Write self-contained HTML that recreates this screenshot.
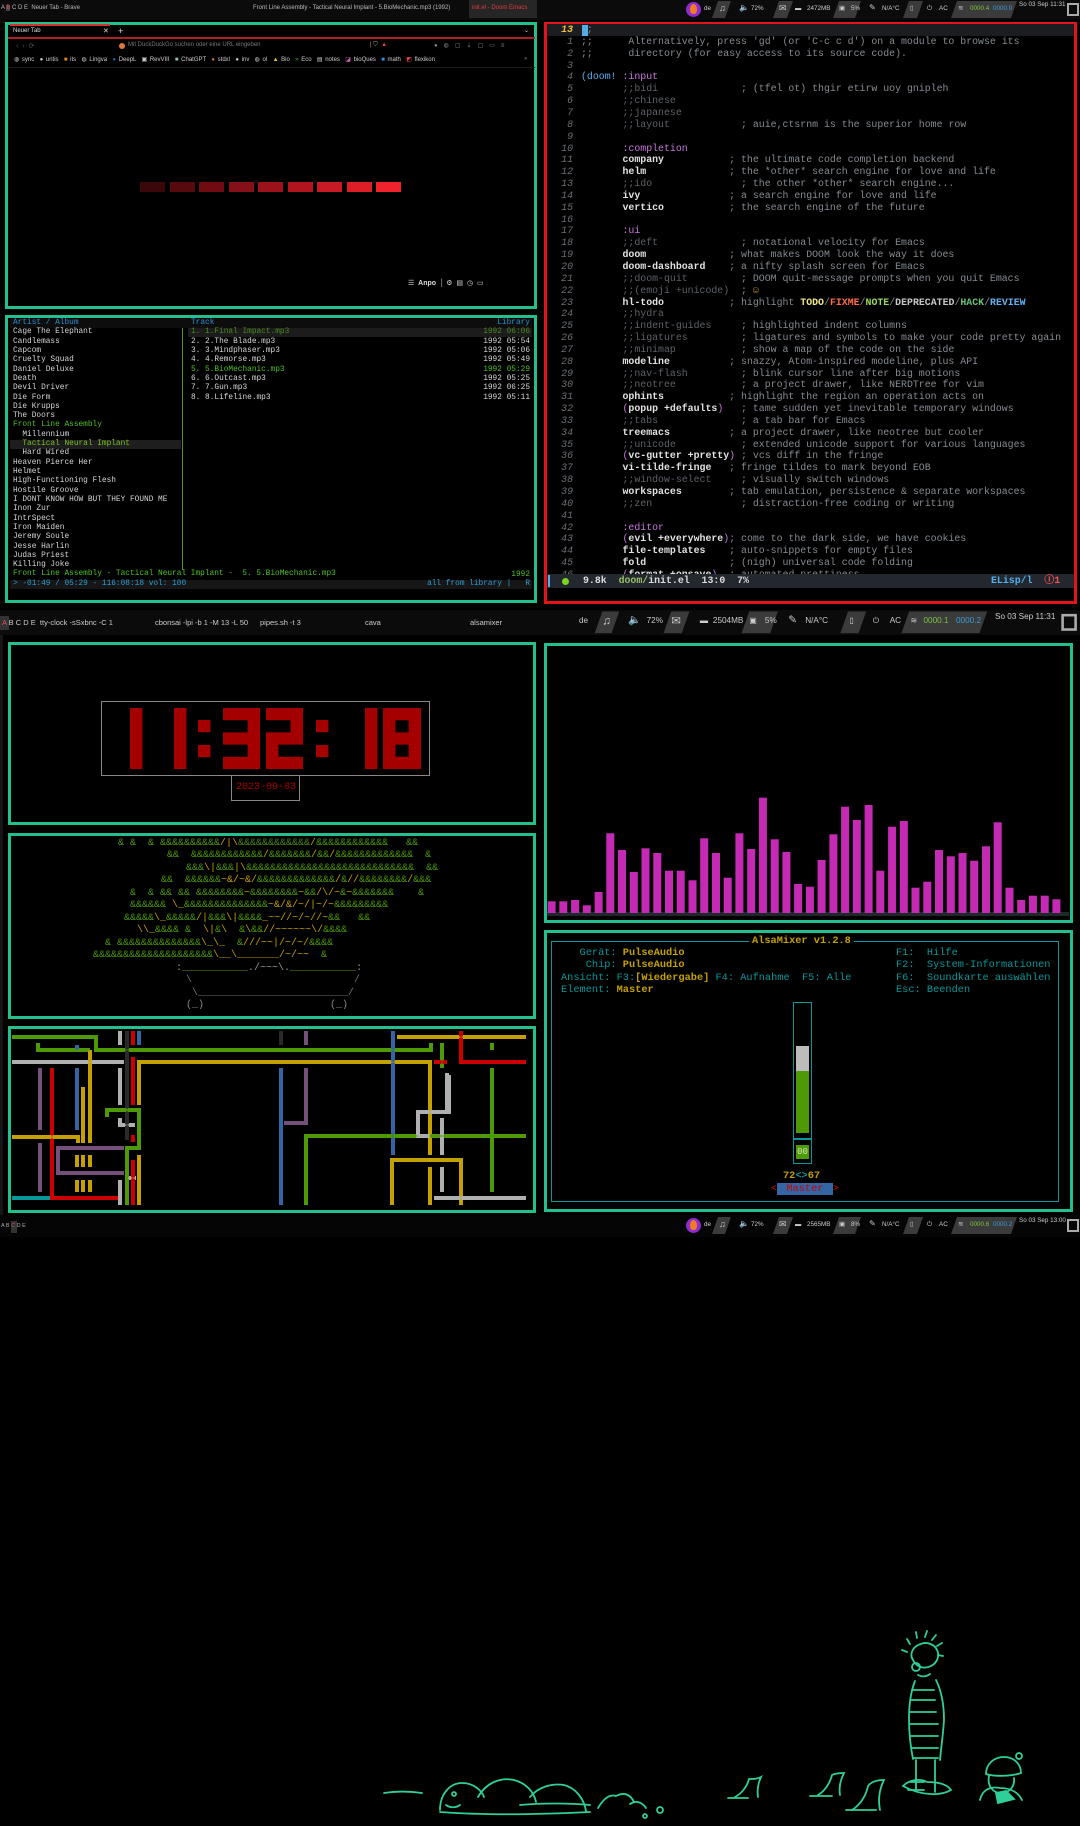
<!DOCTYPE html>
<html><head><meta charset="utf-8">
<style>
*{margin:0;padding:0;box-sizing:border-box}
body{width:1080px;height:1826px;background:#000;position:relative;overflow:hidden;font-family:"Liberation Sans",sans-serif;color:#ccc}
.a{position:absolute}
.gb{position:absolute;border:3px solid #22c08e}
.mono{font-family:"Liberation Mono","DejaVu Sans Mono",monospace;white-space:pre}
.t6{font-size:6px;white-space:nowrap}
.seg{position:absolute;top:1px;height:17px;background:#3b3b3b;clip-path:polygon(6px 0,100% 0,calc(100% - 6px) 100%,0 100%)}
.st{position:absolute;font-size:6.3px;color:#ccc;white-space:nowrap;top:5px}
.c{color:#858b92}.d{color:#5d6269}.k{color:#e2e2e2;font-weight:bold}.m{color:#c678dd}.b{color:#51afef}
</style></head><body>

<!-- TOP BAR -->
<div class="a" style="left:0;top:0;width:1080px;height:20px;background:#0b0b0b"></div>
<div class="a t6" style="left:1px;top:5px;color:#bbb">A <span style="background:#444;color:#e05050">B</span> C D E &nbsp;Neuer Tab - Brave</div>
<div class="a t6" style="left:253px;top:5px;color:#bbb">Front Line Assembly - Tactical Neural Implant - 5.BioMechanic.mp3 (1992)</div>
<div class="a t6" style="left:469px;top:0;width:68px;height:18px;background:#262626;color:#e03a3a;padding:5px 0 0 3px">init.el - Doom Emacs</div>

<div class="a" style="left:685px;top:0;width:395px;height:20px">
 <div class="a" style="left:1px;top:2px;width:15px;height:15px;border-radius:50%;background:#8d2bd0"></div>
 <div class="a" style="left:5px;top:4px;width:7px;height:10px;background:#f07b20;border-radius:50% 50% 40% 40%"></div>
 <div class="st" style="left:19px">de</div>
 <div class="seg" style="left:27px;width:19px"></div><div class="st" style="left:34px;top:3px;font-size:9px">♫</div>
 <div class="st" style="left:54px;top:3px;font-size:8px">🔈</div><div class="st" style="left:66px">72%</div>
 <div class="seg" style="left:88px;width:20px"></div><div class="st" style="left:94px;top:3px;font-size:9px">✉</div>
 <div class="st" style="left:110px">▬</div><div class="st" style="left:122px">2472MB</div>
 <div class="seg" style="left:148px;width:28px"></div><div class="st" style="left:154px">▣</div><div class="st" style="left:166px">5%</div>
 <div class="st" style="left:184px;top:3px;font-size:8px">✎</div><div class="st" style="left:197px">N/A°C</div>
 <div class="seg" style="left:218px;width:20px"></div><div class="st" style="left:225px">▯</div>
 <div class="st" style="left:242px">⏻</div><div class="st" style="left:254px">AC</div>
 <div class="seg" style="left:266px;width:66px"></div><div class="st" style="left:273px">≋</div>
 <div class="st" style="left:285px;color:#7bc043">0000.4</div><div class="st" style="left:308px;color:#3a9bd5">0000.0</div>
 <div class="st" style="left:334px;top:1px">So 03 Sep 11:31</div>
 <div class="a" style="left:382px;top:3px;width:12px;height:13px;border:2px solid #aaa"></div>
</div>

<!-- BROWSER -->
<div class="gb" style="left:5px;top:22px;width:532px;height:287px"></div>
<div class="a" style="left:10px;top:24px;width:100px;height:2px;background:#d0342c"></div>
<div class="a t6" style="left:13px;top:28px;color:#ddd">Neuer Tab</div>
<div class="a t6" style="left:103px;top:27px;color:#ddd;font-size:7px">✕</div>
<div class="a t6" style="left:118px;top:26px;color:#ddd;font-size:9px">+</div>
<div class="a t6" style="left:524px;top:27px;color:#ddd">⌄</div>
<div class="a" style="left:8px;top:37px;width:527px;height:2px;background:#b02020"></div>
<div class="a t6" style="left:16px;top:42px;color:#555;font-size:7px">‹ &nbsp;› &nbsp;⟳</div>
<div class="a" style="left:119px;top:43px;width:6px;height:6px;border-radius:50%;background:#e07840"></div>
<div class="a t6" style="left:128px;top:42px;color:#777">Mit DuckDuckGo suchen oder eine URL eingeben</div>
<div class="a t6" style="left:370px;top:42px;color:#aaa">| ⛉ &nbsp;<span style="color:#e04040">▲</span></div>
<div class="a t6" style="left:434px;top:42px;color:#888;letter-spacing:6px">●◍▢⇣▢▭≡</div>
<div class="a t6" style="left:14px;top:56px;color:#ccc;word-spacing:1px">◍ sync &nbsp;● untis &nbsp;<span style="color:#e08020">■</span> its &nbsp;◍ Lingva &nbsp;<span style="color:#2060a0">●</span> DeepL &nbsp;▣ RevVIII &nbsp;<span style="color:#8bc4a8">■</span> ChatGPT &nbsp;<span style="color:#c07040">●</span> stdxl &nbsp;● inv &nbsp;◍ ol &nbsp;<span style="color:#e0c040">▲</span> Bio &nbsp;<span style="color:#4a4">»</span> Eco &nbsp;▤ notes &nbsp;<span style="color:#c6a">◪</span> bioQues &nbsp;<span style="color:#3a8ee0">■</span> math &nbsp;<span style="color:#e04040">◩</span> flexikon</div>
<div class="a t6" style="left:524px;top:56px;color:#777">»</div>
<div class="a" style="left:8px;top:67px;width:527px;height:1px;background:#1a1a1a"></div>
<div class="a" style="left:140px;top:182px;height:10px;width:265px">
<div class="a" style="left:0;width:25px;height:10px;background:#3b070a"></div>
<div class="a" style="left:29.5px;width:25px;height:10px;background:#560a0e"></div>
<div class="a" style="left:59px;width:25px;height:10px;background:#6e0c12"></div>
<div class="a" style="left:88.5px;width:25px;height:10px;background:#861017"></div>
<div class="a" style="left:118px;width:25px;height:10px;background:#9b121a"></div>
<div class="a" style="left:147.5px;width:25px;height:10px;background:#b0151e"></div>
<div class="a" style="left:177px;width:25px;height:10px;background:#c71a22"></div>
<div class="a" style="left:206.5px;width:25px;height:10px;background:#dc1e27"></div>
<div class="a" style="left:236px;width:25px;height:10px;background:#f0232d"></div>
</div>
<div class="a t6" style="left:408px;top:279px;color:#ddd;font-size:7px">☰ &nbsp;<b>Anpo</b> &nbsp;│ ⚙ &nbsp;▤ &nbsp;◷ &nbsp;▭</div>

<!-- MUSIC (cmus) -->
<div class="gb" style="left:5px;top:315px;width:532px;height:288px"></div>
<div class="a" style="left:10px;top:319px;width:522px;height:9.3px;background:#0d0d0d"></div>
<div class="a" style="left:188px;top:328px;height:9.3px;width:344px;background:#1c1c1c"></div>
<div class="a" style="left:10px;top:440px;width:171px;height:9.3px;background:#1e1e1e"></div>
<div class="a" style="left:182px;top:328px;width:1px;height:242px;background:#4e9a06"></div>
<div class="a" style="left:10px;top:580px;width:522px;height:9.3px;background:#161616"></div>
<div class="a mono" style="left:13px;top:319px;font-size:7.8px;line-height:9.31px;color:#d6d6d6"><span style="color:#2a8fd0">Artist / Album</span>
Cage The Elephant
Candlemass
Capcom
Cruelty Squad
Daniel Deluxe
Death
Devil Driver
Die Form
Die Krupps
The Doors
<span style="color:#4ec020">Front Line Assembly</span>
  Millennium
  <span style="color:#7ac020">Tactical Neural Implant</span>
  Hard Wired
Heaven Pierce Her
Helmet
High-Functioning Flesh
Hostile Groove
I DONT KNOW HOW BUT THEY FOUND ME
Inon Zur
IntrSpect
Iron Maiden
Jeremy Soule
Jesse Harlin
Judas Priest
Killing Joke
<span style="color:#4ec020">Front Line Assembly - Tactical Neural Implant -  5. 5.BioMechanic.mp3</span>
<span style="color:#2a9fd6">&gt; -01:49 / 05:29 - 116:08:18 vol: 100</span></div>
<div class="a mono" style="left:191px;top:319px;font-size:7.8px;line-height:9.31px;color:#d6d6d6"><span style="color:#2a8fd0">Track</span>
<span style="color:#4a8a20">1. 1.Final Impact.mp3</span>
2. 2.The Blade.mp3
3. 3.Mindphaser.mp3
4. 4.Remorse.mp3
<span style="color:#4ec020">5. 5.BioMechanic.mp3</span>
6. 6.Outcast.mp3
7. 7.Gun.mp3
8. 8.Lifeline.mp3</div>
<div class="a mono" style="left:450px;top:319px;width:80px;text-align:right;font-size:7.8px;line-height:9.31px;color:#d6d6d6"><span style="color:#2a8fd0">Library</span>
<span style="color:#4a8a20">1992 06:06</span>
1992 05:54
1992 05:06
1992 05:49
<span style="color:#4ec020">1992 05:29</span>
1992 05:25
1992 06:25
1992 05:11</div>
<div class="a mono" style="left:420px;top:571px;width:110px;text-align:right;font-size:7.8px;line-height:9.31px"><span style="color:#4ec020">1992</span>
<span style="color:#2a9fd6">all from library |   R</span></div>

<!-- EMACS -->
<div class="a" style="left:544px;top:22px;width:533px;height:582px;border:3px solid #e3131c"></div>
<div class="a" style="left:547px;top:24px;width:527px;height:12px;background:#1b1d21"></div>
<div class="a" style="left:582px;top:25px;width:6px;height:11px;background:#51afef"></div>
<div class="a mono" style="left:548px;top:24.1px;width:25px;text-align:right;font-size:9.9px;line-height:11.84px;color:#6a6f76;font-style:italic;height:550px;overflow:hidden"><b style="color:#ecbe3b">13</b>
1
2
3
4
5
6
7
8
9
10
11
12
13
14
15
16
17
18
19
20
21
22
23
24
25
26
27
28
29
30
31
32
33
34
35
36
37
38
39
40
41
42
43
44
45
46</div>
<div class="a mono" style="left:581px;top:24.1px;font-size:9.9px;line-height:11.84px;color:#bbc2cf;height:550px;overflow:hidden"><span class="c">;;</span>
<span class="c">;;      Alternatively, press 'gd' (or 'C-c c d') on a module to browse its</span>
<span class="c">;;      directory (for easy access to its source code).</span>

<span class="b">(doom!</span> <span class="m">:input</span>
       <span class="d">;;bidi</span>              <span class="c">; (tfel ot) thgir etirw uoy gnipleh</span>
       <span class="d">;;chinese</span>
       <span class="d">;;japanese</span>
       <span class="d">;;layout</span>            <span class="c">; auie,ctsrnm is the superior home row</span>

       <span class="m">:completion</span>
       <span class="k">company</span>           <span class="c">; the ultimate code completion backend</span>
       <span class="k">helm</span>              <span class="c">; the *other* search engine for love and life</span>
       <span class="d">;;ido</span>               <span class="c">; the other *other* search engine...</span>
       <span class="k">ivy</span>               <span class="c">; a search engine for love and life</span>
       <span class="k">vertico</span>           <span class="c">; the search engine of the future</span>

       <span class="m">:ui</span>
       <span class="d">;;deft</span>              <span class="c">; notational velocity for Emacs</span>
       <span class="k">doom</span>              <span class="c">; what makes DOOM look the way it does</span>
       <span class="k">doom-dashboard</span>    <span class="c">; a nifty splash screen for Emacs</span>
       <span class="d">;;doom-quit</span>         <span class="c">; DOOM quit-message prompts when you quit Emacs</span>
       <span class="d">;;(emoji +unicode)</span>  <span class="c">; <span style="color:#f5c518">☺</span></span>
       <span class="k">hl-todo</span>           <span class="c">; highlight </span><b style="color:#f0e68c">TODO</b><span class="c">/</span><b style="color:#ff6c4b">FIXME</b><span class="c">/</span><b style="color:#98d85a">NOTE</b><span class="c">/</span><b style="color:#c8c8c8">DEPRECATED</b><span class="c">/</span><b style="color:#6ac07a">HACK</b><span class="c">/</span><b style="color:#61afef">REVIEW</b>
       <span class="d">;;hydra</span>
       <span class="d">;;indent-guides</span>     <span class="c">; highlighted indent columns</span>
       <span class="d">;;ligatures</span>         <span class="c">; ligatures and symbols to make your code pretty again</span>
       <span class="d">;;minimap</span>           <span class="c">; show a map of the code on the side</span>
       <span class="k">modeline</span>          <span class="c">; snazzy, Atom-inspired modeline, plus API</span>
       <span class="d">;;nav-flash</span>         <span class="c">; blink cursor line after big motions</span>
       <span class="d">;;neotree</span>           <span class="c">; a project drawer, like NERDTree for vim</span>
       <span class="k">ophints</span>           <span class="c">; highlight the region an operation acts on</span>
       <span class="m">(</span><span class="k">popup +defaults</span><span class="m">)</span>   <span class="c">; tame sudden yet inevitable temporary windows</span>
       <span class="d">;;tabs</span>              <span class="c">; a tab bar for Emacs</span>
       <span class="k">treemacs</span>          <span class="c">; a project drawer, like neotree but cooler</span>
       <span class="d">;;unicode</span>           <span class="c">; extended unicode support for various languages</span>
       <span class="m">(</span><span class="k">vc-gutter +pretty</span><span class="m">)</span> <span class="c">; vcs diff in the fringe</span>
       <span class="k">vi-tilde-fringe</span>   <span class="c">; fringe tildes to mark beyond EOB</span>
       <span class="d">;;window-select</span>     <span class="c">; visually switch windows</span>
       <span class="k">workspaces</span>        <span class="c">; tab emulation, persistence &amp; separate workspaces</span>
       <span class="d">;;zen</span>               <span class="c">; distraction-free coding or writing</span>

       <span class="m">:editor</span>
       <span class="m">(</span><span class="k">evil +everywhere</span><span class="m">)</span><span class="c">; come to the dark side, we have cookies</span>
       <span class="k">file-templates</span>    <span class="c">; auto-snippets for empty files</span>
       <span class="k">fold</span>              <span class="c">; (nigh) universal code folding</span>
       <span class="m">(</span><span class="k">format +onsave</span><span class="m">)</span>  <span class="c">; automated prettiness</span></div>
<div class="a" style="left:547px;top:574px;width:527px;height:14px;background:#23272e"></div>
<div class="a" style="left:548px;top:575px;width:2px;height:12px;background:#51afef"></div>
<div class="a" style="left:562px;top:578px;width:7px;height:7px;border-radius:50%;background:#7ed321"></div>
<div class="a mono" style="left:583px;top:575px;font-size:9.9px;line-height:12px;color:#ddd;font-weight:bold">9.8k  <span style="color:#98be65">doom/</span>init.el  13:0  7%</div>
<div class="a mono" style="left:991px;top:575px;font-size:9.9px;line-height:12px;color:#51afef;font-weight:bold">ELisp/l  <span style="color:#ff5050">ⓘ1</span></div>

<!-- SECOND BAR -->
<div class="a" style="left:0;top:610px;width:1080px;height:25px;background:#0b0b0b"></div>
<div class="a" style="left:0;top:616px;width:9px;height:14px;background:#333"></div>
<div class="a" style="left:2px;top:618px;font-size:7.5px;color:#ccc;white-space:nowrap"><span style="color:#e05050">A</span> B C D E &nbsp;tty-clock -sSxbnc -C 1</div>
<div class="a" style="left:155px;top:618px;font-size:7.5px;color:#ccc;white-space:nowrap">cbonsai -lpi -b 1 -M 13 -L 50</div>
<div class="a" style="left:260px;top:618px;font-size:7.5px;color:#ccc;white-space:nowrap">pipes.sh -t 3</div>
<div class="a" style="left:365px;top:618px;font-size:7.5px;color:#ccc">cava</div>
<div class="a" style="left:470px;top:618px;font-size:7.5px;color:#ccc">alsamixer</div>
<div class="a" style="left:566px;top:610px;width:395px;height:20px;transform:scale(1.3);transform-origin:0 0">
 <div class="st" style="left:10px">de</div>
 <div class="seg" style="left:22px;width:19px"></div><div class="st" style="left:28px;top:3px;font-size:9px">♫</div>
 <div class="st" style="left:48px;top:3px;font-size:8px">🔈</div><div class="st" style="left:62px">72%</div>
 <div class="seg" style="left:75px;width:20px"></div><div class="st" style="left:81px;top:3px;font-size:9px">✉</div>
 <div class="st" style="left:103px">▬</div><div class="st" style="left:113px">2504MB</div>
 <div class="seg" style="left:135px;width:28px"></div><div class="st" style="left:141px">▣</div><div class="st" style="left:153px">5%</div>
 <div class="st" style="left:171px;top:3px;font-size:8px">✎</div><div class="st" style="left:184px">N/A°C</div>
 <div class="seg" style="left:211px;width:20px"></div><div class="st" style="left:218px">▯</div>
 <div class="st" style="left:236px">⏻</div><div class="st" style="left:249px">AC</div>
 <div class="seg" style="left:258px;width:66px"></div><div class="st" style="left:265px">≋</div>
 <div class="st" style="left:275px;color:#7bc043">0000.1</div><div class="st" style="left:300px;color:#3a9bd5">0000.2</div>
 <div class="st" style="left:330px;top:2px">So 03 Sep 11:31</div>
 <div class="a" style="left:381px;top:3px;width:12px;height:13px;border:2px solid #aaa"></div>
</div>
<div class="a" style="left:0;top:635px;width:3px;height:580px;background:#161616"></div>

<!-- CLOCK -->
<div class="gb" style="left:8px;top:642px;width:528px;height:183px"></div>
<div class="a" style="left:101px;top:701px;width:329px;height:75px;border:1.5px solid #888"></div>
<div class="a" style="left:231px;top:775px;width:69px;height:26px;border:1.5px solid #888;background:#000"></div>
<div class="a mono" style="left:236px;top:782px;font-size:10px;color:#b00000">2023-09-03</div>
<svg class="a" style="left:0;top:0" width="1080" height="1826" fill="#a50000">
 <rect x="130" y="708" width="12.4" height="61"/>
 <rect x="174" y="708" width="12.4" height="61"/>
 <rect x="198" y="720" width="12.4" height="12.2"/><rect x="198" y="745" width="12.4" height="12.2"/>
 <rect x="223" y="708" width="37" height="12.2"/><rect x="247.6" y="708" width="12.4" height="61"/><rect x="223" y="732.4" width="37" height="12.2"/><rect x="223" y="756.8" width="37" height="12.2"/>
 <rect x="266" y="708" width="37" height="12.2"/><rect x="290.6" y="708" width="12.4" height="36"/><rect x="266" y="732.4" width="37" height="12.2"/><rect x="266" y="732.4" width="12.4" height="36.6"/><rect x="266" y="756.8" width="37" height="12.2"/>
 <rect x="316" y="720" width="12.4" height="12.2"/><rect x="316" y="745" width="12.4" height="12.2"/>
 <rect x="365" y="708" width="12.4" height="61"/>
 <path d="M383 708h38v61h-38zM395.4 720.2v12.2h13.2v-12.2zM395.4 744.6v12.2h13.2v-12.2z" fill-rule="evenodd"/>
</svg>

<!-- BONSAI -->
<div class="gb" style="left:8px;top:833px;width:528px;height:186px"></div>
<div class="a mono" style="left:0;top:838px;font-size:10px;line-height:12.46px;color:#4e9a06;width:536px;height:178px;overflow:hidden"><span style="position:absolute;left:118px;top:0"><span style="color:#5a9a10">& &  & &&&&&&&&&&</span><span style="color:#c4a000">/|\</span><span style="color:#4e8a10">&&&&&&&&&&&&</span><span style="color:#c4a000">/</span>&&&&&&&&&&&&   &&</span><span style="position:absolute;left:167px;top:12.46px">&&  &&&&&&&&&&&&<span style="color:#c4a000">/</span>&&&&&&&<span style="color:#c4a000">/</span>&&<span style="color:#c4a000">/</span>&&&&&&&&&&&&&  &</span><span style="position:absolute;left:186px;top:24.9px">&&&<span style="color:#c4a000">\|</span>&&&<span style="color:#c4a000">|\</span>&&&&&&&&&&&&&&&&&&&&&&&&&&&&  &&</span><span style="position:absolute;left:161px;top:37.4px">&&  &&&&&&<span style="color:#c4a000">~&/~&/</span>&&&&&&&&&&&&&<span style="color:#c4a000">/</span>&<span style="color:#c4a000">//</span>&&&&&&&&<span style="color:#c4a000">/</span>&&&</span><span style="position:absolute;left:130px;top:49.8px">&  & && && &&&&&&&&<span style="color:#c4a000">~</span>&&&&&&&&<span style="color:#c4a000">~</span>&&<span style="color:#c4a000">/\/~</span>&<span style="color:#c4a000">~</span>&&&&&&&    &</span><span style="position:absolute;left:130px;top:62.3px">&&&&&& <span style="color:#c4a000">\_</span>&&&&&&&&&&&&&&<span style="color:#c4a000">~&/&/~/|~/~</span>&&&&&&&&&</span><span style="position:absolute;left:124px;top:74.8px">&&&&&<span style="color:#c4a000">\_</span>&&&&&<span style="color:#c4a000">/|</span>&&&<span style="color:#c4a000">\|</span>&&&&<span style="color:#c4a000">_~~//~/~//~</span>&&   &&</span><span style="position:absolute;left:137px;top:87.2px"><span style="color:#c4a000">\\_</span>&&&& &  <span style="color:#c4a000">\|</span>&<span style="color:#c4a000">\</span>  &<span style="color:#c4a000">\</span>&&<span style="color:#c4a000">//~~~~~~\/</span>&&&&</span><span style="position:absolute;left:105px;top:99.7px">& &&&&&&&&&&&&&&<span style="color:#c4a000">\_\_</span>  &<span style="color:#c4a000">///~~|/~/~/</span>&&&&</span><span style="position:absolute;left:93px;top:112.1px">&&&&&&&&&&&&&&&&&&&&<span style="color:#c4a000">\__\_______/~/~~</span>  &</span><span style="position:absolute;left:176px;top:124.6px;color:#999">:<span style="color:#6a9a10">___________</span>./~~~\.<span style="color:#6a9a10">___________</span>:</span><span style="position:absolute;left:180px;top:137px;color:#777"> \                           /</span><span style="position:absolute;left:180px;top:149.5px;color:#777">  \_________________________/</span><span style="position:absolute;left:186px;top:162px;color:#888">(_)                     (_)</span></div>

<!-- PIPES -->
<div class="gb" style="left:8px;top:1026px;width:528px;height:187px"></div>
<svg class="a" style="left:0;top:0" width="1080" height="1826" fill="none" stroke-width="4">
<g id="pp">
 <path stroke="#4e9a06" d="M12 1037H96V1050H431V1043"/>
 <path stroke="#4e9a06" d="M38 1043V1050H90"/>
 <path stroke="#b0b0b0" d="M12 1062H124"/>
 <path stroke="#c4a000" d="M139 1105V1062H430V1155"/>
 <path stroke="#cc0000" d="M52 1068V1198H118"/>
 <path stroke="#75507b" d="M40 1068V1130M40 1143V1192"/>
 <path stroke="#3465a4" d="M77 1045V1050M77 1068V1130"/>
 <path stroke="#c4a000" d="M90 1050V1143M83 1087V1143M12 1137H78V1143"/>
 <path stroke="#75507b" d="M124 1148H58V1173H124"/>
 <path stroke="#c4a000" d="M77 1155V1167M83 1155V1167M90 1155V1167M77 1180V1192M83 1180V1192M90 1180V1192"/>
 <path stroke="#06989a" d="M12 1198H50"/>
 <path stroke="#b0b0b0" d="M120 1031V1045M120 1068V1105M120 1180V1205M120 1118V1125H135M128 1178H136"/>
 <path stroke="#2a2a2a" d="M127 1031V1140"/>
 <path stroke="#cc0000" d="M133 1031V1045M133 1057V1105M133 1135V1142M133 1160V1205"/>
 <path stroke="#3465a4" d="M139 1031V1045"/>
 <path stroke="#4e9a06" d="M107 1117V1110H139V1148H127V1205"/>
 <path stroke="#c4a000" d="M139 1155V1205"/>
 <path stroke="#3465a4" d="M281 1068V1205M393 1031V1155"/>
 <path stroke="#2a2a2a" d="M281 1031V1045"/>
 <path stroke="#75507b" d="M306 1031V1045M306 1068V1123H284"/>
 <path stroke="#4e9a06" d="M306 1205V1136H526M442 1043V1068M492 1043V1050M492 1068V1192"/>
 <path stroke="#c4a000" d="M397 1037H526M430 1167V1205M392 1205V1160H461V1205"/>
 <path stroke="#cc0000" d="M461 1031V1062H526M434 1062H447"/>
 <path stroke="#b0b0b0" d="M447 1112V1075H449M449 1075V1112H418V1136H430M442 1118V1155M442 1167V1192M434 1198H526"/>
</g>
<use href="#pp" stroke="#000" stroke-width="1.2"/>
</svg>

<!-- CAVA -->
<div class="gb" style="left:544px;top:643px;width:529px;height:280px"></div>
<div class="a" style="left:547px;top:912px;width:522px;height:4px;background:#1e2a2a"></div>
<svg class="a" style="left:0;top:0" width="1080" height="1826" fill="#c52ab4">
<rect x="547.6" y="901.3" width="8" height="11.7"/><rect x="559.3" y="901.3" width="8" height="11.7"/><rect x="571.1" y="900" width="8" height="13"/><rect x="582.8" y="905.3" width="8" height="7.7"/><rect x="594.6" y="892" width="8" height="21"/><rect x="606.3" y="833.3" width="8" height="79.7"/><rect x="618.0" y="850" width="8" height="63"/><rect x="629.8" y="872" width="8" height="41"/><rect x="641.5" y="848.3" width="8" height="64.7"/><rect x="653.3" y="853" width="8" height="60"/><rect x="665.0" y="870.7" width="8" height="42.3"/><rect x="676.7" y="870.7" width="8" height="42.3"/><rect x="688.5" y="880.3" width="8" height="32.7"/><rect x="700.2" y="838.3" width="8" height="74.7"/><rect x="712.0" y="853" width="8" height="60"/><rect x="723.7" y="877.7" width="8" height="35.3"/><rect x="735.4" y="833.3" width="8" height="79.7"/><rect x="747.2" y="849" width="8" height="64"/><rect x="758.9" y="797.7" width="8" height="115.3"/><rect x="770.7" y="839.3" width="8" height="73.7"/><rect x="782.4" y="852" width="8" height="61"/><rect x="794.1" y="884" width="8" height="29"/><rect x="805.9" y="886.7" width="8" height="26.3"/><rect x="817.6" y="860" width="8" height="53"/><rect x="829.4" y="834.3" width="8" height="78.7"/><rect x="841.1" y="806.7" width="8" height="106.3"/><rect x="852.8" y="820" width="8" height="93"/><rect x="864.6" y="805" width="8" height="108"/><rect x="876.3" y="870.7" width="8" height="42.3"/><rect x="888.1" y="826.7" width="8" height="86.3"/><rect x="899.8" y="821" width="8" height="92"/><rect x="911.5" y="887.7" width="8" height="25.3"/><rect x="923.3" y="881.7" width="8" height="31.3"/><rect x="935.0" y="850" width="8" height="63"/><rect x="946.8" y="856.3" width="8" height="56.7"/><rect x="958.5" y="853" width="8" height="60"/><rect x="970.2" y="860.7" width="8" height="52.3"/><rect x="982.0" y="846.3" width="8" height="66.7"/><rect x="993.7" y="822.3" width="8" height="90.7"/><rect x="1005.5" y="887.7" width="8" height="25.3"/><rect x="1017.2" y="900" width="8" height="13"/><rect x="1028.9" y="895.7" width="8" height="17.3"/><rect x="1040.7" y="895.7" width="8" height="17.3"/><rect x="1052.4" y="899.3" width="8" height="13.7"/>
</svg>

<!-- ALSAMIXER -->
<div class="gb" style="left:544px;top:930px;width:529px;height:282px"></div>
<div class="a" style="left:551px;top:941px;width:508px;height:261px;border:1.5px solid #06989a"></div>
<div class="a mono" style="left:749px;top:935px;font-size:10.3px;color:#c4a000;font-weight:bold;background:#000;padding:0 3px">AlsaMixer v1.2.8</div>
<div class="a mono" style="left:561px;top:947px;font-size:10.3px;line-height:12.4px;color:#06989a">   Gerät: <b style="color:#c4a000">PulseAudio</b>
    Chip: <b style="color:#c4a000">PulseAudio</b>
Ansicht: F3:<b style="color:#c4a000">[Wiedergabe]</b> F4: Aufnahme  F5: Alle
Element: <b style="color:#c4a000">Master</b></div>
<div class="a mono" style="left:896px;top:947px;font-size:10.3px;line-height:12.4px;color:#06989a">F1:  Hilfe
F2:  System-Informationen
F6:  Soundkarte auswählen
Esc: Beenden</div>
<div class="a" style="left:793px;top:1002px;width:19px;height:162px;border:1.5px solid #06989a"></div>
<div class="a" style="left:793px;top:1138px;width:19px;height:1.5px;background:#06989a"></div>
<div class="a" style="left:796px;top:1046px;width:13px;height:25px;background:#bcbcbc"></div>
<div class="a" style="left:796px;top:1071px;width:13px;height:62px;background:#4e9a06"></div>
<div class="a mono" style="left:796px;top:1145px;width:13px;height:14px;background:#4e9a06;color:#cfe8b0;font-size:9px;text-align:center;line-height:14px">00</div>
<div class="a mono" style="left:783px;top:1170px;font-size:10.3px;font-weight:bold;color:#c4a000">72<span style="color:#06989a">&lt;&gt;</span>67</div>
<div class="a mono" style="left:771px;top:1183px;font-size:10.3px;color:#cc0000">&lt;<span style="background:#3465a4;padding:0 3px"> Master </span>&gt;</div>

<!-- THIRD BAR -->
<div class="a" style="left:0;top:1215px;width:1080px;height:22px;background:#050505"></div>
<div class="a" style="left:11px;top:1221px;width:6px;height:12px;background:#333"></div>
<div class="a" style="left:1px;top:1223px;font-size:5.5px;color:#aaa">A B <span style="color:#e05050">C</span> D E</div>
<div class="a" style="left:685px;top:1216px;width:395px;height:20px">
 <div class="a" style="left:1px;top:2px;width:15px;height:15px;border-radius:50%;background:#8d2bd0"></div>
 <div class="a" style="left:5px;top:4px;width:7px;height:10px;background:#f07b20;border-radius:50% 50% 40% 40%"></div>
 <div class="st" style="left:19px">de</div>
 <div class="seg" style="left:27px;width:19px"></div><div class="st" style="left:34px;top:3px;font-size:9px">♫</div>
 <div class="st" style="left:54px;top:3px;font-size:8px">🔈</div><div class="st" style="left:66px">72%</div>
 <div class="seg" style="left:88px;width:20px"></div><div class="st" style="left:94px;top:3px;font-size:9px">✉</div>
 <div class="st" style="left:110px">▬</div><div class="st" style="left:122px">2565MB</div>
 <div class="seg" style="left:148px;width:28px"></div><div class="st" style="left:154px">▣</div><div class="st" style="left:166px">8%</div>
 <div class="st" style="left:184px;top:3px;font-size:8px">✎</div><div class="st" style="left:197px">N/A°C</div>
 <div class="seg" style="left:218px;width:20px"></div><div class="st" style="left:225px">▯</div>
 <div class="st" style="left:242px">⏻</div><div class="st" style="left:254px">AC</div>
 <div class="seg" style="left:266px;width:66px"></div><div class="st" style="left:273px">≋</div>
 <div class="st" style="left:285px;color:#7bc043">0000.6</div><div class="st" style="left:308px;color:#3a9bd5">0000.2</div>
 <div class="st" style="left:334px;top:1px">So 03 Sep 13:00</div>
 <div class="a" style="left:382px;top:3px;width:12px;height:13px;border:2px solid #aaa"></div>
</div>

<!-- CALVIN & HOBBES wallpaper -->
<svg class="a" style="left:0;top:0" width="1080" height="1826" fill="none" stroke="#2fcf9a" stroke-width="1.8" stroke-linecap="round">
 <path d="M913 1660c-4-6 0-14 8-16 6-3 14 1 16 6 3 6 0 13-6 16-6 3-14 2-18-6z"/>
 <path d="M910 1644l-3-5M917 1638l-1-6M925 1637l2-6M932 1640l4-5M937 1646l5-3M907 1652l-5-2M938 1655l5 1"/>
 <circle cx="916" cy="1667" r="4"/>
 <path d="M918 1675c4 2 8 2 12-1"/>
 <path d="M915 1681c-4 10-6 24-6 38 0 18 2 30 4 40M936 1680c5 10 8 24 8 40-1 16-3 28-4 40"/>
 <path d="M912 1690h22M911 1700h24M910 1712h26M910 1724h28M911 1736h27M912 1748h26M913 1758h25"/>
 <path d="M916 1760v30M935 1760v32"/>
 <path d="M903 1786c6-6 16-8 24-4 10 0 20 2 24 8-10 6-30 6-48-4z"/>
 <path d="M910 1782h14M908 1790h16"/>
 <path d="M986 1774c0-10 8-17 18-17s17 7 17 16c-8 3-26 4-35 1z"/>
 <circle cx="1019" cy="1756" r="3"/>
 <path d="M989 1776c-2 10 4 17 12 17s14-6 13-15"/>
 <path d="M980 1800c2-10 10-14 20-12 10 0 18 4 22 12"/>
 <path fill="#2fcf9a" d="M996 1793l10-2 8 8-16 4z"/>
 <path d="M735 1797c6-3 12-10 14-18 5 0 8 0 12-2-3 6-4 14-3 20"/>
 <path d="M818 1795c7-4 12-12 14-20 4-2 8-2 12-2-4 8-5 16-4 22"/>
 <path d="M852 1810c8-5 14-14 16-24 3-4 8-6 16-6-5 10-6 20-4 30"/>
 <path d="M728 1798h20M810 1796h22M846 1810h30"/>
 <path d="M384 1793c12-2 24-2 38 0"/>
 <path d="M440 1810c0-16 10-27 22-27s20 8 22 14"/>
 <circle cx="454" cy="1794" r="2"/>
 <path d="M446 1805c4 3 10 3 14 0"/>
 <path d="M478 1797c8-14 22-20 36-17 12 3 20 12 22 22"/>
 <path d="M530 1797c8-10 22-14 34-12 12 3 20 14 22 26"/>
 <path d="M520 1805c20-2 50-2 70 0M440 1812c40 3 90 3 150 0"/>
 <path d="M598 1808c6-10 12-14 18-12 8-4 14-2 18 6M630 1804c6-4 12-2 16 4"/>
 <circle cx="660" cy="1810" r="3"/><circle cx="645" cy="1816" r="2"/>
</svg>
</body></html>
